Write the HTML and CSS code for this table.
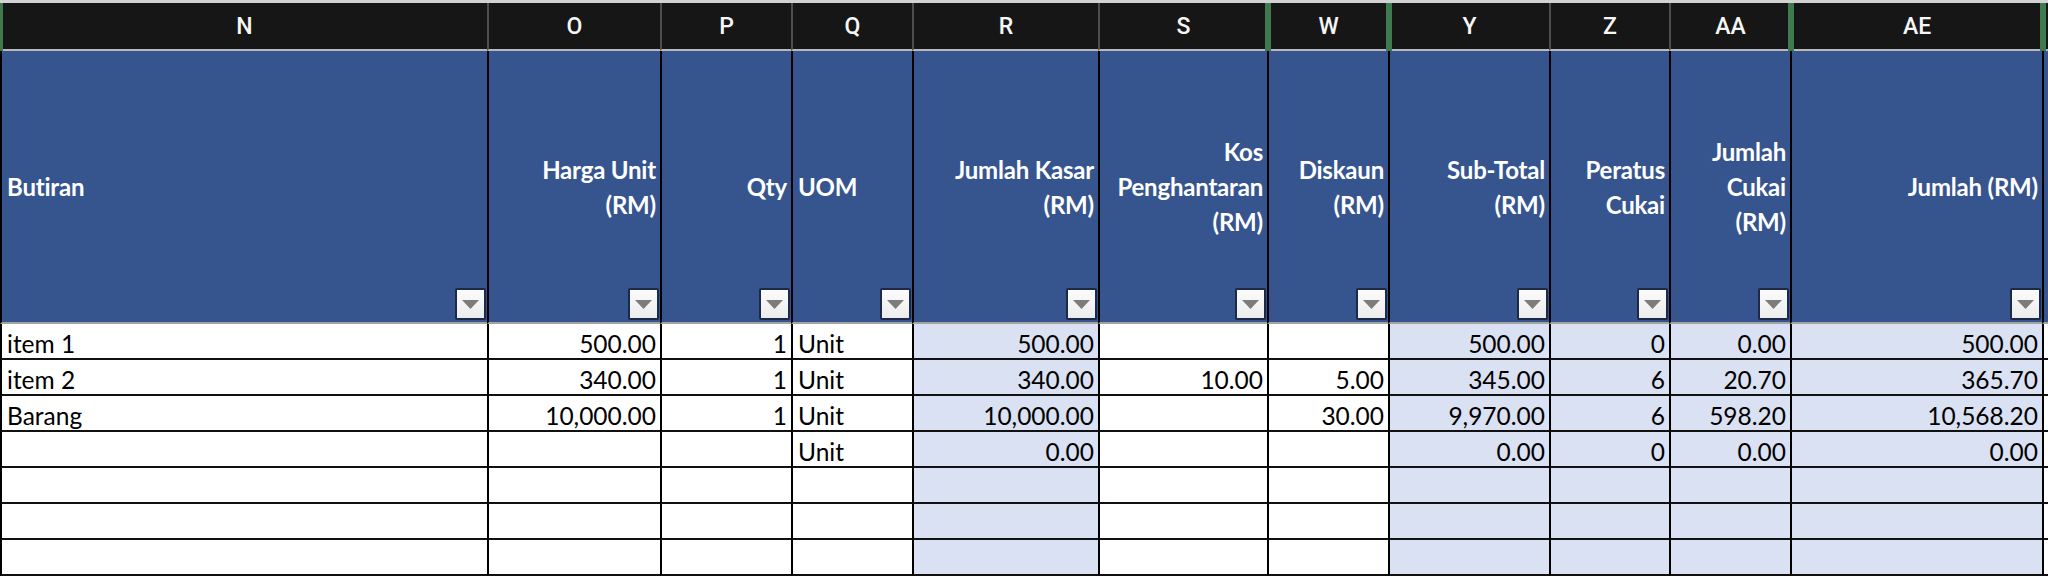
FILE: index.html
```html
<!DOCTYPE html>
<html lang="ms">
<head>
<meta charset="utf-8">
<title>Sheet</title>
<link rel="stylesheet" href="styles.css">
</head>
<body>
<div class="sheet">
  <div class="col-letter first hid">N</div>
  <div class="col-letter">O</div>
  <div class="col-letter">P</div>
  <div class="col-letter">Q</div>
  <div class="col-letter">R</div>
  <div class="col-letter">S</div>
  <div class="col-letter hid">W</div>
  <div class="col-letter hid">Y</div>
  <div class="col-letter">Z</div>
  <div class="col-letter">AA</div>
  <div class="col-letter hid">AE</div>
  <div class="col-letter hid"></div>

  <div class="th left"><span>Butiran</span><button class="filter"><svg viewBox="0 0 17 9" width="17" height="9"><polygon points="0,0 17,0 8.5,9"/></svg></button></div>
  <div class="th"><span>Harga Unit<br>(RM)</span><button class="filter"><svg viewBox="0 0 17 9" width="17" height="9"><polygon points="0,0 17,0 8.5,9"/></svg></button></div>
  <div class="th"><span>Qty</span><button class="filter"><svg viewBox="0 0 17 9" width="17" height="9"><polygon points="0,0 17,0 8.5,9"/></svg></button></div>
  <div class="th left"><span>UOM</span><button class="filter"><svg viewBox="0 0 17 9" width="17" height="9"><polygon points="0,0 17,0 8.5,9"/></svg></button></div>
  <div class="th"><span>Jumlah Kasar<br>(RM)</span><button class="filter"><svg viewBox="0 0 17 9" width="17" height="9"><polygon points="0,0 17,0 8.5,9"/></svg></button></div>
  <div class="th"><span>Kos<br>Penghantaran<br>(RM)</span><button class="filter"><svg viewBox="0 0 17 9" width="17" height="9"><polygon points="0,0 17,0 8.5,9"/></svg></button></div>
  <div class="th"><span>Diskaun<br>(RM)</span><button class="filter"><svg viewBox="0 0 17 9" width="17" height="9"><polygon points="0,0 17,0 8.5,9"/></svg></button></div>
  <div class="th"><span>Sub-Total<br>(RM)</span><button class="filter"><svg viewBox="0 0 17 9" width="17" height="9"><polygon points="0,0 17,0 8.5,9"/></svg></button></div>
  <div class="th"><span>Peratus<br>Cukai</span><button class="filter"><svg viewBox="0 0 17 9" width="17" height="9"><polygon points="0,0 17,0 8.5,9"/></svg></button></div>
  <div class="th"><span>Jumlah<br>Cukai<br>(RM)</span><button class="filter"><svg viewBox="0 0 17 9" width="17" height="9"><polygon points="0,0 17,0 8.5,9"/></svg></button></div>
  <div class="th"><span>Jumlah (RM)</span><button class="filter"><svg viewBox="0 0 17 9" width="17" height="9"><polygon points="0,0 17,0 8.5,9"/></svg></button></div>
  <div class="th"></div>

  <div class="td left">item 1</div><div class="td">500.00</div><div class="td">1</div><div class="td left">Unit</div><div class="td calc">500.00</div><div class="td"></div><div class="td"></div><div class="td calc">500.00</div><div class="td calc">0</div><div class="td calc">0.00</div><div class="td calc">500.00</div><div class="td"></div>

  <div class="td left">item 2</div><div class="td">340.00</div><div class="td">1</div><div class="td left">Unit</div><div class="td calc">340.00</div><div class="td">10.00</div><div class="td">5.00</div><div class="td calc">345.00</div><div class="td calc">6</div><div class="td calc">20.70</div><div class="td calc">365.70</div><div class="td"></div>

  <div class="td left">Barang</div><div class="td">10,000.00</div><div class="td">1</div><div class="td left">Unit</div><div class="td calc">10,000.00</div><div class="td"></div><div class="td">30.00</div><div class="td calc">9,970.00</div><div class="td calc">6</div><div class="td calc">598.20</div><div class="td calc">10,568.20</div><div class="td"></div>

  <div class="td left"></div><div class="td"></div><div class="td"></div><div class="td left">Unit</div><div class="td calc">0.00</div><div class="td"></div><div class="td"></div><div class="td calc">0.00</div><div class="td calc">0</div><div class="td calc">0.00</div><div class="td calc">0.00</div><div class="td"></div>

  <div class="td"></div><div class="td"></div><div class="td"></div><div class="td"></div><div class="td calc"></div><div class="td"></div><div class="td"></div><div class="td calc"></div><div class="td calc"></div><div class="td calc"></div><div class="td calc"></div><div class="td"></div>

  <div class="td"></div><div class="td"></div><div class="td"></div><div class="td"></div><div class="td calc"></div><div class="td"></div><div class="td"></div><div class="td calc"></div><div class="td calc"></div><div class="td calc"></div><div class="td calc"></div><div class="td"></div>

  <div class="td"></div><div class="td"></div><div class="td"></div><div class="td"></div><div class="td calc"></div><div class="td"></div><div class="td"></div><div class="td calc"></div><div class="td calc"></div><div class="td calc"></div><div class="td calc"></div><div class="td"></div>
</div>
</body>
</html>
```

FILE: styles.css
```css
html, body {
  margin: 0;
  padding: 0;
  background: #ffffff;
  overflow: hidden;
}

.sheet {
  width: 2048px;
  display: grid;
  grid-template-columns: 487px 173px 131px 121px 186px 169px 121px 161px 120px 121px 252px 6px;
  grid-template-rows: 48px 273px repeat(7, 36px);
  border-top: 3px solid #d2d2d2;
  font-family: Lato, "Open Sans", sans-serif;
}

.col-letter {
  position: relative;
  background: #161616;
  color: #f6f6f6;
  border-left: 2px solid #4e4e4e;
  border-bottom: 2px solid #b9b9b9;
  display: flex;
  align-items: center;
  justify-content: center;
  font-family: Roboto, "Liberation Sans", sans-serif;
  font-weight: 500;
  font-size: 23px;
  overflow: visible;
}

.col-letter.hid::before {
  content: "";
  position: absolute;
  top: 0;
  bottom: -2px;
  left: -4px;
  width: 6px;
  background: #3e7a4d;
  z-index: 1;
}

.col-letter.first.hid::before {
  left: -2px;
  width: 3px;
}

.th {
  position: relative;
  background: #36558f;
  color: #ffffff;
  font-weight: 700;
  font-size: 24px;
  line-height: 35px;
  border-left: 2px solid #000;
  border-bottom: 2px solid #a3a3a3;
  display: flex;
  align-items: center;
  justify-content: flex-end;
  text-align: right;
  padding: 0 4px 0 5px;
  overflow: hidden;
}

.th.left {
  justify-content: flex-start;
  text-align: left;
}

.th span {
  white-space: nowrap;
  letter-spacing: -0.2px;
}

.filter {
  position: absolute;
  right: 1px;
  bottom: 2px;
  width: 31px;
  height: 32px;
  padding: 0;
  margin: 0;
  border: 2px solid #1c2a48;
  border-radius: 2px;
  background: linear-gradient(#fbfbfb, #ececec);
  display: flex;
  align-items: center;
  justify-content: center;
}

.filter svg {
  display: block;
  fill: #7c7c7c;
}

.td {
  background: #ffffff;
  color: #000;
  font-size: 24.5px;
  line-height: 28px;
  border-left: 2px solid #000;
  border-bottom: 2px solid #111;
  display: flex;
  align-items: flex-end;
  justify-content: flex-end;
  padding: 0 4px 0 5px;
  white-space: nowrap;
  overflow: hidden;
}

.td.left {
  justify-content: flex-start;
}

.td.calc {
  background: #d9e1f2;
}
```
